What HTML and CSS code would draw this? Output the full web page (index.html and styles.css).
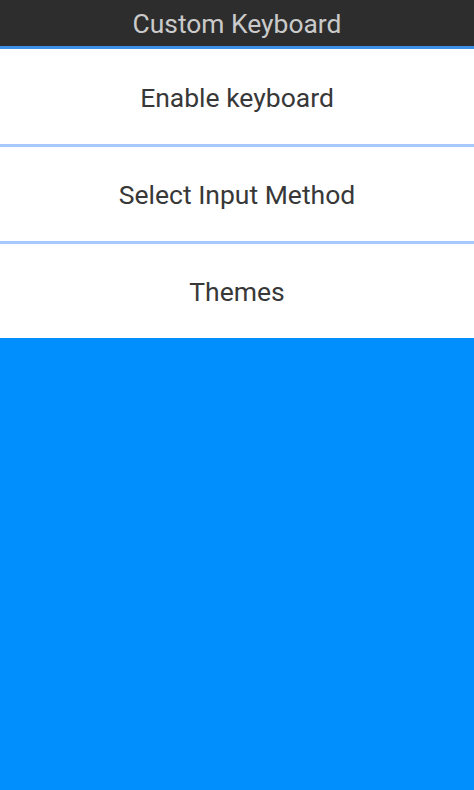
FILE: index.html
```html
<!DOCTYPE html>
<html lang="en">
<head>
    <meta charset="UTF-8">
    <meta name="viewport" content="width=device-width, initial-scale=1.0">
    <title>Custom Keyboard</title>
    <link rel="stylesheet" href="styles.css">
</head>
<body>
    <div class="app">
        <div class="title-bar">Custom Keyboard</div>

        <div class="menu">
            <div class="menu-item">Enable keyboard</div>
            <div class="menu-item">Select Input Method</div>
            <div class="menu-item">Themes</div>
        </div>

        <div class="filler"></div>
    </div>
</body>
</html>
```

FILE: styles.css
```css
html, body {
    margin: 0;
    height: 100%;
}
body {
    font-family: Roboto, "Noto Sans", sans-serif;
    background: #008ffd;
}
.app {
    display: flex;
    flex-direction: column;
    height: 100%;
}
.title-bar {
    height: 49px;
    padding-top: 1px;
    box-sizing: border-box;
    background: #2d2d2d;
    border-bottom: 3px solid #3d8fe8;
    color: #cacaca;
    font-size: 26.4px;
    display: flex;
    align-items: center;
    justify-content: center;
}
.menu {
    background: #fff;
}
.menu-item {
    height: 97px;
    padding-top: 1px;
    box-sizing: border-box;
    display: flex;
    align-items: center;
    justify-content: center;
    font-size: 26.5px;
    color: #383838;
    border-bottom: 3px solid #a6c8ff;
}
.menu-item:first-child {
    height: 98px;
}
.menu-item:last-child {
    height: 94px;
    border-bottom: none;
}
.filler {
    flex: 1;
    background: #008ffd;
}
```
